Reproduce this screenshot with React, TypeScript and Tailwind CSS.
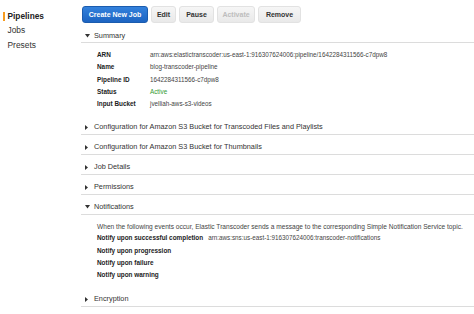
import React from "react";

const SUMMARY_ROWS: { label: string; value: string; green?: boolean }[] = [
  {
    label: "ARN",
    value:
      "arn:aws:elastictranscoder:us-east-1:916307624006:pipeline/1642284311566-c7dpw8",
  },
  { label: "Name", value: "blog-transcoder-pipeline" },
  { label: "Pipeline ID", value: "1642284311566-c7dpw8" },
  { label: "Status", value: "Active", green: true },
  { label: "Input Bucket", value: "jvelliah-aws-s3-videos" },
];

const NOTIFY_ROWS: { label: string; value?: string }[] = [
  {
    label: "Notify upon successful completion",
    value: "arn:aws:sns:us-east-1:916307624006:transcoder-notifications",
  },
  { label: "Notify upon progression" },
  { label: "Notify upon failure" },
  { label: "Notify upon warning" },
];

function Caret({ open }: { open: boolean }) {
  return (
    <span className="w-[9px] shrink-0 flex items-center">
      {open ? (
        <svg width="5" height="4" viewBox="0 0 5 4">
          <polygon points="0,0 5,0 2.5,3.6" fill="#333" />
        </svg>
      ) : (
        <svg width="3" height="5" viewBox="0 0 3 5">
          <polygon points="0,0 3,2.5 0,5" fill="#333" />
        </svg>
      )}
    </span>
  );
}

function SectionHeader({ title, open = false }: { title: string; open?: boolean }) {
  return (
    <div className="flex items-center pl-[4px] pt-[7.5px] pb-[1.5px] leading-[10px] border-b border-[#dcdcdc] text-[7.3px] text-[#333]">
      <Caret open={open} />
      <span>{title}</span>
    </div>
  );
}

function Button({
  children,
  width,
  primary,
  disabled,
}: {
  children: React.ReactNode;
  width: string;
  primary?: boolean;
  disabled?: boolean;
}) {
  if (primary) {
    return (
      <button
        className={`${width} h-[17px] rounded-[3px] border border-[#1b5cae] bg-gradient-to-b from-[#3381dc] to-[#1c64c2] text-white font-bold text-[7px] leading-none`}
      >
        {children}
      </button>
    );
  }
  return (
    <button
      className={`${width} h-[17px] rounded-[3px] border border-[#e2e2e2] bg-gradient-to-b from-[#f6f6f6] to-[#e9e9e9] font-bold text-[7px] leading-none ${
        disabled ? "text-[#bdbdbd]" : "text-[#333]"
      }`}
    >
      {children}
    </button>
  );
}

export default function App() {
  return (
    <div className="flex w-[474px] h-[314px] overflow-hidden bg-white font-['Liberation_Sans',Arial,sans-serif] text-[#333]">
      {/* Sidebar */}
      <aside className="w-[81px] shrink-0 pt-[9px]">
        <div className="flex items-center h-[14.5px]">
          <span className="ml-[2.5px] w-[2px] h-[9px] bg-[#f79b1e]" />
          <span className="ml-[3px] text-[8.3px] font-bold text-[#222]">Pipelines</span>
        </div>
        <div className="flex items-center h-[14.5px] pl-[7.5px] text-[8.4px] text-[#333]">
          Jobs
        </div>
        <div className="flex items-center h-[14.5px] pl-[7.5px] text-[8.4px] text-[#333]">
          Presets
        </div>
      </aside>

      {/* Main */}
      <main className="flex-1 min-w-0 pt-[6px]">
        <div className="flex gap-[3px] ml-[1px]">
          <Button width="w-[66px]" primary>
            Create New Job
          </Button>
          <Button width="w-[25px]">Edit</Button>
          <Button width="w-[35px]">Pause</Button>
          <Button width="w-[38px]" disabled>
            Activate
          </Button>
          <Button width="w-[43px]">Remove</Button>
        </div>

        <SectionHeader title="Summary" open />
        <div className="pt-[6px] pb-[4.5px] pl-[16px] leading-[12.3px]">
          {SUMMARY_ROWS.map((r) => (
            <div key={r.label} className="flex whitespace-nowrap">
              <span className="w-[53px] shrink-0 font-bold text-[6.4px] text-[#222]">{r.label}</span>
              <span className={`text-[6.3px] ${r.green ? "text-[#2f9a2f]" : "text-[#444]"}`}>
                {r.value}
              </span>
            </div>
          ))}
        </div>

        <SectionHeader title="Configuration for Amazon S3 Bucket for Transcoded Files and Playlists" />
        <SectionHeader title="Configuration for Amazon S3 Bucket for Thumbnails" />
        <SectionHeader title="Job Details" />
        <SectionHeader title="Permissions" />
        <SectionHeader title="Notifications" open />
        <div className="pt-[7.5px] pb-[5px] pl-[16px]">
          <div className="text-[6.6px] leading-[10px] text-[#444] whitespace-nowrap">
            When the following events occur, Elastic Transcoder sends a message to the
            corresponding Simple Notification Service topic.
          </div>
          {NOTIFY_ROWS.map((r) => (
            <div key={r.label} className="flex gap-[5px] leading-[12.3px] whitespace-nowrap">
              <span className="font-bold text-[6.4px] text-[#222]">{r.label}</span>
              {r.value && <span className="text-[6.3px] text-[#444]">{r.value}</span>}
            </div>
          ))}
        </div>
        <SectionHeader title="Encryption" />
      </main>
    </div>
  );
}
